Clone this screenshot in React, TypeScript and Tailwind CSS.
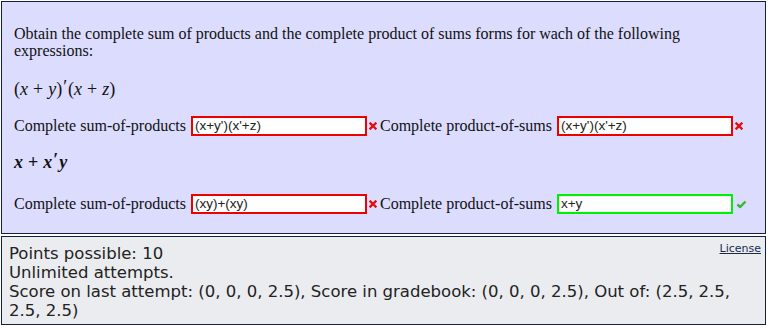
import React from "react";

function Wrong() {
  return (
    <svg width="8" height="8" viewBox="0 0 8 8" className="ml-[2px] mr-[3px] shrink-0">
      <path d="M1.5 1.5 L6.5 6.5 M6.5 1.5 L1.5 6.5" stroke="#e01010" strokeWidth="2.4" strokeLinecap="square" />
    </svg>
  );
}

function Right() {
  return (
    <svg width="11" height="9" viewBox="0 0 11 9" className="ml-[3px] mr-[2px] shrink-0">
      <path d="M1.5 4.5 L4.2 7 L9.5 1.5" stroke="#34b834" strokeWidth="2.4" fill="none" strokeLinejoin="round" />
    </svg>
  );
}

function Answer({ label, value, ok }: { label: string; value: string; ok: boolean }) {
  return (
    <span className="inline-flex items-center">
      <span className="mr-[5px]">{label}</span>
      <span
        className={
          "inline-block w-[176px] h-[20px] bg-white border-[2px] px-[2px] leading-[16px] text-[13.5px] text-[#222] " +
          (ok ? "border-[#00ee00]" : "border-[#ee0000]")
        }
        style={{ fontFamily: "'Liberation Sans', Arial, sans-serif" }}
      >
        {value}
      </span>
      {ok ? <Right /> : <Wrong />}
    </span>
  );
}

function V({ c }: { c: string }) {
  return <i className="italic">{c}</i>;
}

function Op({ c }: { c: string }) {
  return <span className="mx-[5px]">{c}</span>;
}

function Prime() {
  return <span className="relative -top-[2px] mx-[1px]">′</span>;
}

export default function App() {
  return (
    <main className="w-[773px] h-[330px] bg-white relative overflow-hidden pt-[1px] pl-[1px]" style={{ fontFamily: "'Liberation Serif', 'Times New Roman', serif" }}>
      <div className="w-[765px] h-[233px] bg-[#dcdcfe] border border-[#14203c] px-[12px] pt-[23px] text-[16px] text-[#111]">
        <p className="leading-[17px] pr-[10px]">
          Obtain the complete sum of products and the complete product of sums forms for wach of the following expressions:
        </p>
        <p className="mt-[20px] text-[18px] leading-[20px]">
          (<V c="x" /><Op c="+" /><V c="y" />)<Prime />(<V c="x" /><Op c="+" /><V c="z" />)
        </p>
        <div className="mt-[15px] flex items-center">
          <Answer label="Complete sum-of-products" value="(x+y')(x'+z)" ok={false} />
          <Answer label="Complete product-of-sums" value="(x+y')(x'+z)" ok={false} />
        </div>
        <p className="mt-[14px] text-[18px] leading-[20px] font-semibold">
          <V c="x" /><Op c="+" /><V c="x" /><Prime /><V c="y" />
        </p>
        <div className="mt-[20px] flex items-center">
          <Answer label="Complete sum-of-products" value="(xy)+(xy)" ok={false} />
          <Answer label="Complete product-of-sums" value="x+y" ok={true} />
        </div>
      </div>
      <div
        className="mt-[2px] w-[765px] h-[89px] bg-[#ebecef] border border-[#14203c] pl-[7px] pr-[20px] pt-[7px] text-[16.5px] leading-[19px] text-[#222] relative"
        style={{ fontFamily: "'DejaVu Sans', Verdana, sans-serif" }}
      >
        <a className="absolute right-[4px] top-[5px] text-[11px] leading-[14px] underline text-[#1a2a50]">License</a>
        <div>Points possible: 10</div>
        <div>Unlimited attempts.</div>
        <div>Score on last attempt: (0, 0, 0, 2.5), Score in gradebook: (0, 0, 0, 2.5), Out of: (2.5, 2.5, 2.5, 2.5)</div>
      </div>
    </main>
  );
}
